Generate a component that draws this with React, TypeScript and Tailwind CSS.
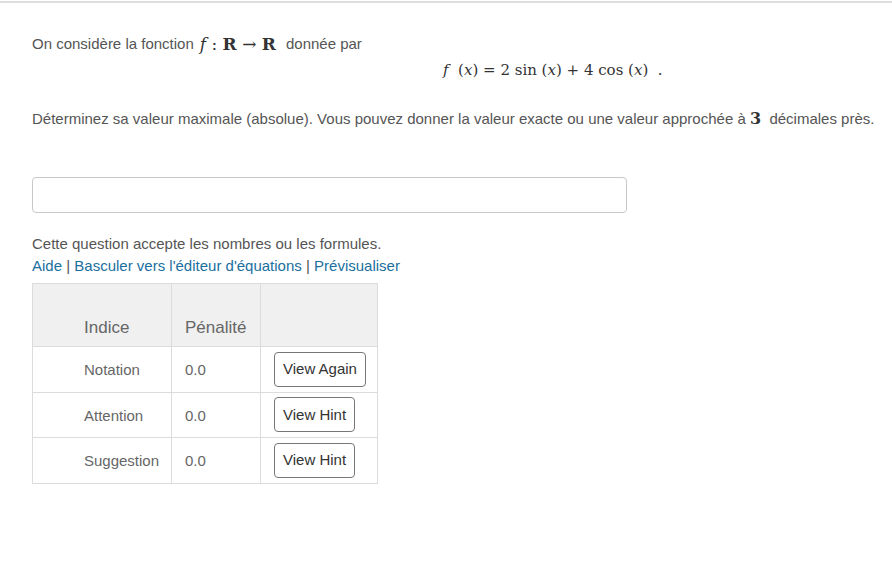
export default function App() {
  return (
    <div className="min-h-screen w-full bg-white font-['Liberation_Sans',Arial,sans-serif] text-[15px] text-[#555]">
      {/*top rule*/}
      <div className="h-[2px] w-full bg-[#dedede] mt-px" />

      <div className="pl-8 pt-[31px]">
        {/*question text*/}
        <div className="h-5 leading-5 flex items-center whitespace-nowrap">
          <span>On considère la fonction</span>
          <span className="ml-[6px] font-['DejaVu_Serif','Liberation_Serif',serif] text-[17px] text-[#333]">
            <i>f</i> : <b>R</b> → <b>R</b>
          </span>
          <span className="ml-[10px]">donnée par</span>
        </div>
        <div className="mt-[6px] pl-[411px] h-5 leading-5 font-['DejaVu_Serif','Liberation_Serif',serif] text-[15px] text-[#333] whitespace-nowrap">
          <i>f</i>&nbsp; (<i>x</i>) = 2 sin (<i>x</i>) + 4 cos (<i>x</i>) &nbsp;.
        </div>

        <div className="mt-[29px] h-5 leading-5 whitespace-nowrap">
          Déterminez sa valeur maximale (absolue). Vous pouvez donner la valeur exacte ou une valeur approchée à{" "}
          <span className="font-['DejaVu_Serif',serif] text-[16px] font-bold text-[#333]">3</span>&nbsp; décimales près.
        </div>

        {/*answer box*/}
        <input
          type="text"
          className="mt-[48px] block w-[595px] h-9 rounded-[4px] border border-[#c8c8c8] bg-white outline-none"
        />

        <div className="mt-[20px] leading-[22px]">Cette question accepte les nombres ou les formules.</div>
        <div className="leading-[22px] text-[#555]">
          <a className="text-[#1a6f9e]">Aide</a> |{" "}
          <a className="text-[#1a6f9e]">Basculer vers l'éditeur d'équations</a> |{" "}
          <a className="text-[#1a6f9e]">Prévisualiser</a>
        </div>

        {/*hints table*/}
        <table className="mt-[6px] border-collapse border border-[#dcdcdc] text-[#666]">
          <thead>
            <tr className="bg-[#f0f0f0] h-[63px]">
              <th className="w-[139px] border border-[#dcdcdc] align-bottom pb-[6px] pl-[51px] text-left font-normal text-[17px]">
                Indice
              </th>
              <th className="w-[89px] border border-[#dcdcdc] align-bottom pb-[6px] pl-[13px] text-left font-normal text-[17px]">
                Pénalité
              </th>
              <th className="w-[117px] border border-[#dcdcdc]" />
            </tr>
          </thead>
          <tbody>
            {[
              ["Notation", "View Again"],
              ["Attention", "View Hint"],
              ["Suggestion", "View Hint"],
            ].map(([name, label]) => (
              <tr key={name} className="h-[45.5px]">
                <td className="border border-[#dcdcdc] pl-[51px] pt-[2px]">{name}</td>
                <td className="border border-[#dcdcdc] pl-[13px] pt-[2px]">0.0</td>
                <td className="border border-[#dcdcdc] pl-[13px]">
                  <button className="h-[35px] px-2 rounded-[4px] border border-[#777] bg-white text-[#333] text-[15px]">
                    {label}
                  </button>
                </td>
              </tr>
            ))}
          </tbody>
        </table>
      </div>
    </div>
  );
}
